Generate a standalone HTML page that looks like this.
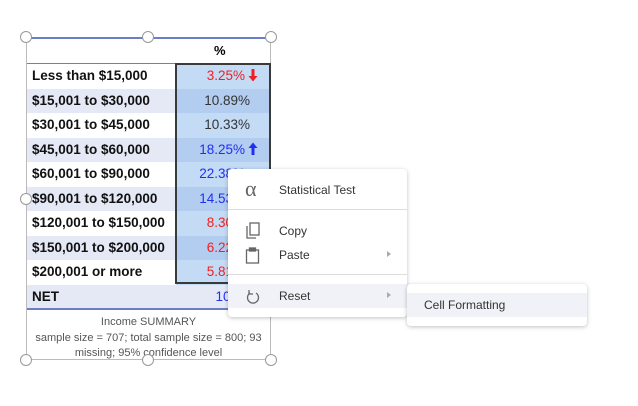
<!DOCTYPE html>
<html><head><style>
body{margin:0;width:638px;height:406px;background:#fff;font-family:"Liberation Sans",sans-serif;position:relative;overflow:hidden}
.a{position:absolute}
.row{position:absolute;left:27px;width:243px;height:24.5px}
.lab{position:absolute;left:5px;top:4px;font-weight:bold;font-size:13.5px;color:#111}
.val{position:absolute;left:149px;width:94px;height:100%;text-align:right;font-size:13.5px;top:0;line-height:24px}
.h{position:absolute;width:10px;height:10px;border:1.5px solid #999;border-radius:50%;background:#fff}
.mi{position:absolute;left:279px;font-size:12px;color:#333}
</style></head><body>
<div class="a" style="left:26px;top:37px;width:245px;height:323px;border:1px solid #bbb;border-top:none;box-sizing:border-box"></div>
<div class="a" style="left:26px;top:37px;width:245px;height:1.5px;background:#6b7fc6"></div>
<div class="a" style="left:214px;top:43px;font-weight:bold;font-size:13px">%</div>
<div class="a" style="left:27px;top:63px;width:150px;height:1.5px;background:#6b7fc6"></div>

<div class="row" style="top:64px;background:#fff"><div class="lab">Less than $15,000</div><div class="val" style="background:#c4dbf6;color:#f02020;padding-right:25px;box-sizing:border-box">3.25%</div></div>
<div class="row" style="top:88.5px;background:#e5e8f5"><div class="lab">$15,001 to $30,000</div><div class="val" style="background:#b2cdf0;color:#333;padding-right:20px;box-sizing:border-box">10.89%</div></div>
<div class="row" style="top:113px;background:#fff"><div class="lab">$30,001 to $45,000</div><div class="val" style="background:#c4dbf6;color:#333;padding-right:20px;box-sizing:border-box">10.33%</div></div>
<div class="row" style="top:137.5px;background:#e5e8f5"><div class="lab">$45,001 to $60,000</div><div class="val" style="background:#b2cdf0;color:#2030f0;padding-right:25px;box-sizing:border-box">18.25%</div></div>
<div class="row" style="top:162px;background:#fff"><div class="lab">$60,001 to $90,000</div><div class="val" style="background:#c4dbf6;color:#2030f0;padding-right:25px;box-sizing:border-box">22.38%</div></div>
<div class="row" style="top:186.5px;background:#e5e8f5"><div class="lab">$90,001 to $120,000</div><div class="val" style="background:#b2cdf0;color:#2030f0;padding-right:25px;box-sizing:border-box">14.53%</div></div>
<div class="row" style="top:211px;background:#fff"><div class="lab">$120,001 to $150,000</div><div class="val" style="background:#c4dbf6;color:#f02020;padding-right:25px;box-sizing:border-box">8.30%</div></div>
<div class="row" style="top:235.5px;background:#e5e8f5"><div class="lab">$150,001 to $200,000</div><div class="val" style="background:#b2cdf0;color:#f02020;padding-right:25px;box-sizing:border-box">6.22%</div></div>
<div class="row" style="top:260px;background:#fff"><div class="lab">$200,001 or more</div><div class="val" style="background:#c4dbf6;color:#f02020;padding-right:25px;box-sizing:border-box">5.81%</div></div>
<div class="row" style="top:284.5px;background:#e5e8f5;height:24px"><div class="lab">NET</div><div class="val" style="color:#2030f0;padding-right:20px;box-sizing:border-box">100%</div></div>
<div class="a" style="left:27px;top:308px;width:243px;height:1.5px;background:#6b7fc6"></div>
<div class="a" style="left:175px;top:63px;width:96px;height:221px;border:2.5px solid #3a3a3a;box-sizing:border-box"></div>
<svg class="a" style="left:248px;top:68px" width="10" height="14"><path d="M5 1V9" stroke="#f02020" stroke-width="3"/><path d="M0.5 8L5 13.5L9.5 8Z" fill="#f02020"/></svg>
<svg class="a" style="left:248px;top:142px" width="10" height="14"><path d="M5 13V5" stroke="#2030f0" stroke-width="3"/><path d="M0.5 6L5 0.5L9.5 6Z" fill="#2030f0"/></svg>

<div class="a" style="left:27px;top:315px;width:243px;text-align:center;font-size:11px;color:#555;line-height:15.5px">Income SUMMARY<br>sample size = 707; total sample size = 800; 93 missing; 95% confidence level</div>

<div class="h" style="left:20px;top:31px"></div><div class="h" style="left:142px;top:31px"></div><div class="h" style="left:265px;top:31px"></div>
<div class="h" style="left:20px;top:193px"></div>
<div class="h" style="left:20px;top:354px"></div><div class="h" style="left:142px;top:354px"></div><div class="h" style="left:265px;top:354px"></div>

<div class="a" style="left:228px;top:169px;width:179px;height:148px;background:#fff;border-radius:4px;box-shadow:0 1px 4px rgba(0,0,0,.25)"></div>
<div class="a" style="left:228px;top:209px;width:179px;height:1px;background:#ddd"></div>
<div class="a" style="left:228px;top:274px;width:179px;height:1px;background:#ddd"></div>
<div class="a" style="left:228px;top:284px;width:179px;height:24px;background:#f0f2f8"></div>
<div class="a" style="left:245px;top:176px;font-size:22px;color:#666;font-family:'Liberation Serif',serif">α</div>
<svg class="a" style="left:245px;top:222px" width="16" height="18" fill="none" stroke="#666" stroke-width="1.3"><rect x="5" y="1" width="9" height="12"/><path d="M2 4V16H11"/></svg>
<svg class="a" style="left:245px;top:247px" width="16" height="18" fill="none" stroke="#666" stroke-width="1.3"><rect x="1.5" y="3" width="12" height="13"/><rect x="4.5" y="1" width="6" height="3" fill="#666"/></svg>
<svg class="a" style="left:245px;top:289px" width="16" height="16" fill="none" stroke="#666" stroke-width="1.3"><path d="M5 4A5.5 5.5 0 1 0 11 4"/><path d="M4 1V5H8"/></svg>
<div class="mi" style="top:183px">Statistical Test</div>
<div class="mi" style="top:224px">Copy</div>
<div class="mi" style="top:248px">Paste</div>
<div class="mi" style="top:289px">Reset</div>
<div class="a" style="left:387px;top:251px;border-left:4px solid #aaa;border-top:3.5px solid transparent;border-bottom:3.5px solid transparent"></div>
<div class="a" style="left:387px;top:292px;border-left:4px solid #aaa;border-top:3.5px solid transparent;border-bottom:3.5px solid transparent"></div>

<div class="a" style="left:407px;top:284px;width:180px;height:42px;background:#fff;border-radius:4px;box-shadow:0 1px 4px rgba(0,0,0,.25)"></div>
<div class="a" style="left:407px;top:293px;width:180px;height:24px;background:#f0f2f8"></div>
<div class="a" style="left:424px;top:298px;font-size:12px;color:#333">Cell Formatting</div>
</body></html>
